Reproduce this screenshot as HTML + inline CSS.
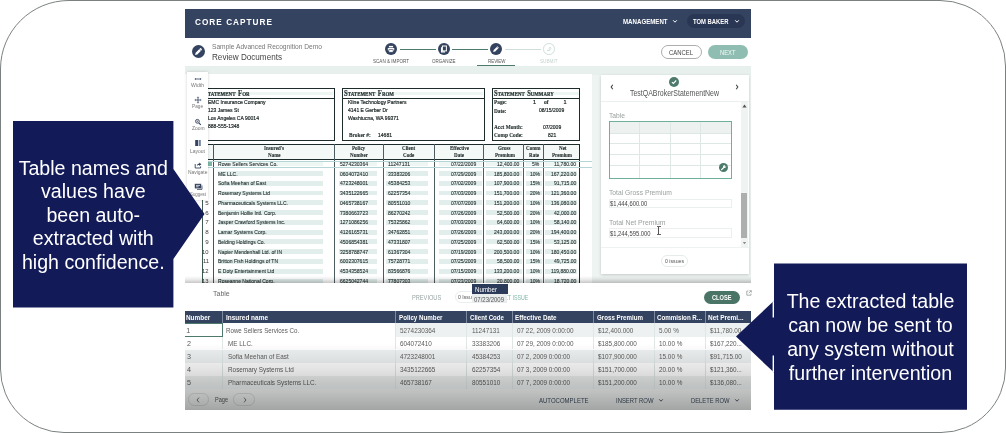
<!DOCTYPE html>
<html><head><meta charset="utf-8"><title>Core Capture</title>
<style>
*{box-sizing:border-box;margin:0;padding:0}
html,body{width:1006px;height:433px;overflow:hidden;background:#fff}
body{position:relative;font-family:"Liberation Sans",sans-serif;color:#444}
.a{position:absolute}
.t{position:absolute;white-space:pre;line-height:1}
.clip{position:absolute;left:0;top:0;width:1006px;height:433px}
.call{position:absolute;background:#141c5c}
</style></head><body><div id="root" style="position:absolute;left:0;top:0;width:1006px;height:433px;will-change:transform">
<div class="a" style="left:0;top:0;width:1006px;height:433px;border:1.5px solid #7b8080;border-radius:69px 66px 65px 64px"></div>
<div class="a" style="left:185px;top:9px;width:566px;height:401px;background:#fff;"></div>
<div class="a" style="left:185px;top:66px;width:566px;height:217px;background:#eef4f2;"></div>
<div class="a" style="left:185px;top:66px;width:566px;height:8.7px;background:#e8f0ed;"></div>
<div class="a" style="left:185px;top:9px;width:566px;height:28.5px;background:#34435f;"></div>
<div class="t" style="left:195.00px;top:17.00px;font-size:9.8px;color:#fff;font-weight:bold;letter-spacing:1.207px;transform:scaleX(0.8400);transform-origin:0 0;">CORE CAPTURE</div>
<div class="t" style="left:622.70px;top:18.00px;font-size:7.4px;color:#fff;font-weight:bold;transform:scaleX(0.8290);transform-origin:0 0;">MANAGEMENT</div>
<svg class="a" style="left:672px;top:19.3px" width="6" height="5" viewBox="0 0 6 5"><path d="M1.2 1.3 L3 3.2 L4.8 1.3" fill="none" stroke="#fff" stroke-width="1"/></svg>
<div class="a" style="left:686.7px;top:14.3px;width:58.3px;height:14px;background:#2a3754;border-radius:7px"></div>
<div class="t" style="left:693.00px;top:18.00px;font-size:7.4px;color:#fff;font-weight:bold;transform:scaleX(0.7955);transform-origin:0 0;">TOM BAKER</div>
<svg class="a" style="left:733.5px;top:19.3px" width="6" height="5" viewBox="0 0 6 5"><path d="M1.2 1.3 L3 3.2 L4.8 1.3" fill="none" stroke="#fff" stroke-width="1"/></svg>
<div class="a" style="left:185px;top:37.5px;width:566px;height:28.5px;background:#fff;"></div>
<div class="a" style="left:192px;top:45px;width:13px;height:13px;background:#34435f;border-radius:50%"></div>
<svg class="a" style="left:192px;top:45px" width="13" height="13" viewBox="0 0 13 13"><path d="M3.1 9.9 L3.6 7.7 L8.1 3.2 Q8.6 2.8 9.1 3.3 L9.7 3.9 Q10.2 4.4 9.8 4.9 L5.3 9.4 Z" fill="#fff"/><path d="M7.3 4 L9 5.7" stroke="#34435f" stroke-width=".55"/></svg>
<div class="t" style="left:212.20px;top:43.00px;font-size:7.3px;color:#777;transform:scaleX(0.9099);transform-origin:0 0;">Sample Advanced Recognition Demo</div>
<div class="t" style="left:212.20px;top:53.00px;font-size:8.7px;color:#444;transform:scaleX(0.9353);transform-origin:0 0;">Review Documents</div>
<div class="a" style="left:399.7px;top:48.5px;width:36.0px;height:1.1px;background:#4d7a6c;"></div>
<div class="a" style="left:452.4px;top:48.5px;width:36.0px;height:1.1px;background:#4d7a6c;"></div>
<div class="a" style="left:504.6px;top:48.5px;width:36.0px;height:1.1px;background:#cfdedb;"></div>
<div class="a" style="left:385.20000000000005px;top:43.1px;width:11.8px;height:11.8px;background:#34435f;border-radius:50%"></div>
<div class="a" style="left:437.90000000000003px;top:43.1px;width:11.8px;height:11.8px;background:#34435f;border-radius:50%"></div>
<div class="a" style="left:490.40000000000003px;top:43.1px;width:11.8px;height:11.8px;background:#34435f;border-radius:50%"></div>
<div class="a" style="left:543.1px;top:43.2px;width:11.6px;height:11.6px;background:#fff;border-radius:50%;border:1px solid #cfe0dc"></div>
<svg class="a" style="left:385.1px;top:43px" width="12" height="12" viewBox="0 0 12 12"><rect x="3.9" y="2.9" width="4.2" height="1.5" fill="#fff"/><rect x="2.8" y="4.9" width="6.4" height="2.9" rx=".7" fill="#fff"/><rect x="3.9" y="6.7" width="4.2" height="2.5" fill="#fff" stroke="#34435f" stroke-width=".6"/></svg>
<svg class="a" style="left:437.8px;top:43px" width="12" height="12" viewBox="0 0 12 12"><rect x="4.4" y="3" width="4" height="4.9" fill="none" stroke="#fff" stroke-width="1"/><path d="M3.5 4.2 V8.9 H7" fill="none" stroke="#fff" stroke-width="1.1"/></svg>
<svg class="a" style="left:490.3px;top:43px" width="12" height="12" viewBox="0 0 12 12"><path d="M3.2 8.9 L3.7 6.9 L7.4 3.2 L8.9 4.7 L5.2 8.4 Z" fill="#fff"/><path d="M6.7 3.9 L8.2 5.4" stroke="#34435f" stroke-width=".5"/></svg>
<svg class="a" style="left:542.9px;top:43px" width="12" height="12" viewBox="0 0 12 12"><path d="M4 7.4 H7 V4.6 M5.8 5.4 L7 4.2 L8.2 5.4" fill="none" stroke="#c3d8d3" stroke-width=".8"/></svg>
<div class="t" style="left:373.10px;top:59.00px;font-size:5.4px;color:#555;transform:scaleX(0.8483);transform-origin:0 0;">SCAN &amp; IMPORT</div>
<div class="t" style="left:432.05px;top:59.00px;font-size:5.4px;color:#555;transform:scaleX(0.8346);transform-origin:0 0;">ORGANIZE</div>
<div class="t" style="left:487.55px;top:59.00px;font-size:5.4px;color:#555;transform:scaleX(0.8229);transform-origin:0 0;">REVIEW</div>
<div class="t" style="left:540.15px;top:59.00px;font-size:5.4px;color:#c5d3d0;transform:scaleX(0.8589);transform-origin:0 0;">SUBMIT</div>
<div class="a" style="left:476.7px;top:64.5px;width:38.5px;height:1.5px;background:#4d7a6c;"></div>
<div class="a" style="left:660.8px;top:45px;width:41px;height:14px;background:#fff;border-radius:7px;border:1px solid #adadad"></div>
<div class="t" style="left:669.30px;top:49.00px;font-size:7.2px;color:#444;transform:scaleX(0.8227);transform-origin:0 0;">CANCEL</div>
<div class="a" style="left:707.5px;top:45px;width:40.5px;height:14px;background:#8fbdb1;border-radius:7px"></div>
<div class="t" style="left:720.05px;top:49.00px;font-size:7.2px;color:#f4fbf8;transform:scaleX(0.8085);transform-origin:0 0;">NEXT</div>
<div class="clip" style="clip-path:inset(74px 414px 150px 185px)">
<div class="a" style="left:185px;top:74px;width:407px;height:209px;background:#fff;"></div>
<div class="a" style="left:202px;top:88.2px;width:132.8px;height:52.5px;border:1.6px solid #1d2b2b"></div>
<div class="a" style="left:202px;top:97.7px;width:132.8px;height:1px;background:#1d2b2b;"></div>
<div class="a" style="left:203.3px;top:91.8px;width:130.20000000000002px;height:3.6px;background:#eef6f3;"></div>
<div class="a" style="left:342.3px;top:88.2px;width:142.5px;height:52.5px;border:1.6px solid #1d2b2b"></div>
<div class="a" style="left:342.3px;top:97.7px;width:142.5px;height:1px;background:#1d2b2b;"></div>
<div class="a" style="left:343.6px;top:91.8px;width:139.9px;height:3.6px;background:#eef6f3;"></div>
<div class="a" style="left:491.8px;top:88.2px;width:88.49999999999994px;height:52.5px;border:1.6px solid #1d2b2b"></div>
<div class="a" style="left:491.8px;top:97.7px;width:88.49999999999994px;height:1px;background:#1d2b2b;"></div>
<div class="a" style="left:493.1px;top:91.8px;width:85.89999999999995px;height:3.6px;background:#eef6f3;"></div>
<div class="t" style="left:203.6px;top:90px;font-family:'Liberation Serif',serif;font-size:7.4px;font-weight:bold;word-spacing:1px;color:#263030;-webkit-text-stroke:.2px #263030;transform:scaleX(0.9044);transform-origin:0 0">S<span style="font-size:5.5px">TATEMENT</span> F<span style="font-size:5.5px">OR</span></div>
<div class="t" style="left:344.2px;top:90px;font-family:'Liberation Serif',serif;font-size:7.4px;font-weight:bold;word-spacing:1px;color:#263030;-webkit-text-stroke:.2px #263030;transform:scaleX(0.8989);transform-origin:0 0">S<span style="font-size:5.5px">TATEMENT</span> F<span style="font-size:5.5px">ROM</span></div>
<div class="t" style="left:493.8px;top:90px;font-family:'Liberation Serif',serif;font-size:7.4px;font-weight:bold;word-spacing:1px;color:#263030;-webkit-text-stroke:.2px #263030;transform:scaleX(0.8800);transform-origin:0 0">S<span style="font-size:5.5px">TATEMENT</span> S<span style="font-size:5.5px">UMMARY</span></div>
<div class="t" style="left:207.80px;top:100.00px;font-size:5.6px;color:#1a2222;transform:scaleX(0.9000);transform-origin:0 0;-webkit-text-stroke:.2px currentColor;">EMC Insurance Company</div>
<div class="t" style="left:207.80px;top:108.00px;font-size:5.6px;color:#1a2222;transform:scaleX(0.9000);transform-origin:0 0;-webkit-text-stroke:.2px currentColor;">123 James St</div>
<div class="t" style="left:207.80px;top:116.00px;font-size:5.6px;color:#1a2222;transform:scaleX(0.9000);transform-origin:0 0;-webkit-text-stroke:.2px currentColor;">Los Angeles CA 90014</div>
<div class="t" style="left:207.80px;top:124.00px;font-size:5.6px;color:#1a2222;transform:scaleX(0.9000);transform-origin:0 0;-webkit-text-stroke:.2px currentColor;">888-555-1348</div>
<div class="t" style="left:348.30px;top:100.00px;font-size:5.6px;color:#1a2222;transform:scaleX(0.9000);transform-origin:0 0;-webkit-text-stroke:.2px currentColor;">Kline Technology Partners</div>
<div class="t" style="left:348.30px;top:108.00px;font-size:5.6px;color:#1a2222;transform:scaleX(0.9000);transform-origin:0 0;-webkit-text-stroke:.2px currentColor;">4141 E Gerber Dr</div>
<div class="t" style="left:348.30px;top:116.00px;font-size:5.6px;color:#1a2222;transform:scaleX(0.9000);transform-origin:0 0;-webkit-text-stroke:.2px currentColor;">Washtucna, WA 99371</div>
<div class="t" style="left:348.50px;top:133.00px;font-size:5.6px;color:#263030;font-weight:bold;font-family:'Liberation Serif',serif;transform:scaleX(0.9500);transform-origin:0 0;-webkit-text-stroke:.1px currentColor;">Broker #:</div>
<div class="t" style="left:378.30px;top:133.00px;font-size:5.6px;color:#1a2222;transform:scaleX(0.9000);transform-origin:0 0;-webkit-text-stroke:.2px currentColor;">14681</div>
<div class="t" style="left:493.80px;top:100.00px;font-size:5.6px;color:#263030;font-weight:bold;font-family:'Liberation Serif',serif;transform:scaleX(0.9500);transform-origin:0 0;-webkit-text-stroke:.1px currentColor;">Page:</div>
<div class="t" style="left:493.80px;top:109.00px;font-size:5.6px;color:#263030;font-weight:bold;font-family:'Liberation Serif',serif;transform:scaleX(0.9500);transform-origin:0 0;-webkit-text-stroke:.1px currentColor;">Date:</div>
<div class="t" style="left:493.80px;top:125.00px;font-size:5.6px;color:#263030;font-weight:bold;font-family:'Liberation Serif',serif;transform:scaleX(0.9500);transform-origin:0 0;-webkit-text-stroke:.1px currentColor;">Acct Month:</div>
<div class="t" style="left:493.80px;top:133.00px;font-size:5.6px;color:#263030;font-weight:bold;font-family:'Liberation Serif',serif;transform:scaleX(0.9500);transform-origin:0 0;-webkit-text-stroke:.1px currentColor;">Comp Code:</div>
<div class="t" style="left:533.00px;top:100.00px;font-size:5.6px;color:#1a2222;-webkit-text-stroke:.2px currentColor;">1</div>
<div class="t" style="left:544.00px;top:100.00px;font-size:5.6px;color:#263030;font-weight:bold;font-family:'Liberation Serif',serif;-webkit-text-stroke:.1px currentColor;">of</div>
<div class="t" style="left:563.50px;top:100.00px;font-size:5.6px;color:#1a2222;-webkit-text-stroke:.2px currentColor;">1</div>
<div class="t" style="left:539.40px;top:108.00px;font-size:5.6px;color:#1a2222;transform:scaleX(0.9000);transform-origin:0 0;-webkit-text-stroke:.2px currentColor;">08/15/2009</div>
<div class="t" style="left:542.89px;top:125.00px;font-size:5.6px;color:#1a2222;transform:scaleX(0.9000);transform-origin:0 0;-webkit-text-stroke:.2px currentColor;">07/2009</div>
<div class="t" style="left:547.80px;top:133.00px;font-size:5.6px;color:#1a2222;transform:scaleX(0.9000);transform-origin:0 0;-webkit-text-stroke:.2px currentColor;">821</div>
<div class="a" style="left:201.7px;top:143.8px;width:378.6px;height:1.2px;background:#1d2b2b;"></div>
<div class="a" style="left:201.7px;top:158.8px;width:378.6px;height:1px;background:#1d2b2b;"></div>
<div class="a" style="left:202px;top:144.6px;width:377.5px;height:14.4px;background:#f4f8f7;"></div>
<div class="a" style="left:201.8px;top:143.8px;width:1px;height:145px;background:#3f5a52;"></div>
<div class="a" style="left:212.9px;top:143.8px;width:1px;height:145px;background:#3f5a52;"></div>
<div class="a" style="left:334.20000000000005px;top:143.8px;width:0.8px;height:145px;background:#4d5d5f;"></div>
<div class="a" style="left:382.8px;top:143.8px;width:0.8px;height:145px;background:#4d5d5f;"></div>
<div class="a" style="left:434.0px;top:143.8px;width:0.8px;height:145px;background:#4d5d5f;"></div>
<div class="a" style="left:483.3px;top:143.8px;width:0.8px;height:145px;background:#4d5d5f;"></div>
<div class="a" style="left:523.4px;top:143.8px;width:0.8px;height:145px;background:#4d5d5f;"></div>
<div class="a" style="left:543.1px;top:143.8px;width:0.8px;height:145px;background:#4d5d5f;"></div>
<div class="a" style="left:578.55px;top:143.8px;width:1.9px;height:145px;background:#1d2b2b;"></div>
<div class="t" style="left:263.97px;top:146.00px;font-size:5.2px;color:#263030;font-weight:bold;font-family:'Liberation Serif',serif;transform:scaleX(0.9700);transform-origin:0 0;-webkit-text-stroke:.1px currentColor;">Insured&#x27;s</div>
<div class="t" style="left:267.71px;top:153.00px;font-size:5.2px;color:#263030;font-weight:bold;font-family:'Liberation Serif',serif;transform:scaleX(0.9700);transform-origin:0 0;-webkit-text-stroke:.1px currentColor;">Name</div>
<div class="t" style="left:352.33px;top:146.00px;font-size:5.2px;color:#263030;font-weight:bold;font-family:'Liberation Serif',serif;transform:scaleX(0.9700);transform-origin:0 0;-webkit-text-stroke:.1px currentColor;">Policy</div>
<div class="t" style="left:349.95px;top:153.00px;font-size:5.2px;color:#263030;font-weight:bold;font-family:'Liberation Serif',serif;transform:scaleX(0.9700);transform-origin:0 0;-webkit-text-stroke:.1px currentColor;">Number</div>
<div class="t" style="left:402.23px;top:146.00px;font-size:5.2px;color:#263030;font-weight:bold;font-family:'Liberation Serif',serif;transform:scaleX(0.9700);transform-origin:0 0;-webkit-text-stroke:.1px currentColor;">Client</div>
<div class="t" style="left:403.21px;top:153.00px;font-size:5.2px;color:#263030;font-weight:bold;font-family:'Liberation Serif',serif;transform:scaleX(0.9700);transform-origin:0 0;-webkit-text-stroke:.1px currentColor;">Code</div>
<div class="t" style="left:449.50px;top:146.00px;font-size:5.2px;color:#263030;font-weight:bold;font-family:'Liberation Serif',serif;transform:scaleX(0.9700);transform-origin:0 0;-webkit-text-stroke:.1px currentColor;">Effective</div>
<div class="t" style="left:453.97px;top:153.00px;font-size:5.2px;color:#263030;font-weight:bold;font-family:'Liberation Serif',serif;transform:scaleX(0.9700);transform-origin:0 0;-webkit-text-stroke:.1px currentColor;">Date</div>
<div class="t" style="left:498.36px;top:146.00px;font-size:5.2px;color:#263030;font-weight:bold;font-family:'Liberation Serif',serif;transform:scaleX(0.9700);transform-origin:0 0;-webkit-text-stroke:.1px currentColor;">Gross</div>
<div class="t" style="left:494.58px;top:153.00px;font-size:5.2px;color:#263030;font-weight:bold;font-family:'Liberation Serif',serif;transform:scaleX(0.9700);transform-origin:0 0;-webkit-text-stroke:.1px currentColor;">Premium</div>
<div class="t" style="left:526.33px;top:146.00px;font-size:5.2px;color:#263030;font-weight:bold;font-family:'Liberation Serif',serif;transform:scaleX(0.9700);transform-origin:0 0;-webkit-text-stroke:.1px currentColor;">Comm</div>
<div class="t" style="left:528.57px;top:153.00px;font-size:5.2px;color:#263030;font-weight:bold;font-family:'Liberation Serif',serif;transform:scaleX(0.9700);transform-origin:0 0;-webkit-text-stroke:.1px currentColor;">Rate</div>
<div class="t" style="left:558.63px;top:146.00px;font-size:5.2px;color:#263030;font-weight:bold;font-family:'Liberation Serif',serif;transform:scaleX(0.9700);transform-origin:0 0;-webkit-text-stroke:.1px currentColor;">Net</div>
<div class="t" style="left:552.38px;top:153.00px;font-size:5.2px;color:#263030;font-weight:bold;font-family:'Liberation Serif',serif;transform:scaleX(0.9700);transform-origin:0 0;-webkit-text-stroke:.1px currentColor;">Premium</div>
<div class="a" style="left:217.5px;top:161.4px;width:105.0px;height:4.8px;background:#eef6f4;"></div>
<div class="a" style="left:338.6px;top:161.4px;width:38.099999999999966px;height:4.8px;background:#eef6f4;"></div>
<div class="a" style="left:386.4px;top:161.4px;width:42.10000000000002px;height:4.8px;background:#eef6f4;"></div>
<div class="a" style="left:439px;top:161.4px;width:43px;height:4.8px;background:#eef6f4;"></div>
<div class="a" style="left:486.3px;top:161.4px;width:35.900000000000034px;height:4.8px;background:#eef6f4;"></div>
<div class="a" style="left:525.6px;top:161.4px;width:16.399999999999977px;height:4.8px;background:#eef6f4;"></div>
<div class="a" style="left:545.3px;top:161.4px;width:32.200000000000045px;height:4.8px;background:#eef6f4;"></div>
<div class="a" style="left:200px;top:160.9px;width:392px;height:0.9px;background:#b4d6d6;"></div>
<div class="a" style="left:200px;top:167.4px;width:392px;height:0.9px;background:#b4d6d6;"></div>
<div class="a" style="left:208.3px;top:162px;width:3.6px;height:4.2px;background:#7fb7a6;"></div>
<div class="t" style="left:204.05px;top:161.00px;font-size:6.2px;color:#3a3a3a;">1</div>
<div class="t" style="left:217.80px;top:162.00px;font-size:5.6px;color:#263030;transform:scaleX(0.9000);transform-origin:0 0;-webkit-text-stroke:.1px currentColor;">Rowe Sellers Services Co.</div>
<div class="t" style="left:339.50px;top:162.00px;font-size:5.6px;color:#263030;transform:scaleX(0.9000);transform-origin:0 0;-webkit-text-stroke:.1px currentColor;">5274230364</div>
<div class="t" style="left:387.90px;top:162.00px;font-size:5.6px;color:#263030;transform:scaleX(0.9000);transform-origin:0 0;-webkit-text-stroke:.1px currentColor;">11247131</div>
<div class="t" style="left:450.50px;top:162.00px;font-size:5.6px;color:#263030;transform:scaleX(0.9000);transform-origin:0 0;-webkit-text-stroke:.1px currentColor;">07/22/2009</div>
<div class="t" style="left:497.20px;top:162.00px;font-size:5.6px;color:#263030;transform:scaleX(0.9000);transform-origin:0 0;-webkit-text-stroke:.1px currentColor;">12,400.00</div>
<div class="t" style="left:531.76px;top:162.00px;font-size:5.6px;color:#263030;transform:scaleX(0.9000);transform-origin:0 0;-webkit-text-stroke:.1px currentColor;">5%</div>
<div class="t" style="left:553.96px;top:162.00px;font-size:5.6px;color:#263030;transform:scaleX(0.9000);transform-origin:0 0;-webkit-text-stroke:.1px currentColor;">11,780.00</div>
<div class="a" style="left:217.5px;top:171.16px;width:105.0px;height:4.8px;background:#e1eeeb;"></div>
<div class="a" style="left:338.6px;top:171.16px;width:38.099999999999966px;height:4.8px;background:#e1eeeb;"></div>
<div class="a" style="left:386.4px;top:171.16px;width:42.10000000000002px;height:4.8px;background:#e1eeeb;"></div>
<div class="a" style="left:439px;top:171.16px;width:43px;height:4.8px;background:#e1eeeb;"></div>
<div class="a" style="left:486.3px;top:171.16px;width:35.900000000000034px;height:4.8px;background:#e1eeeb;"></div>
<div class="a" style="left:525.6px;top:171.16px;width:16.399999999999977px;height:4.8px;background:#e1eeeb;"></div>
<div class="a" style="left:545.3px;top:171.16px;width:32.200000000000045px;height:4.8px;background:#e1eeeb;"></div>
<div class="t" style="left:204.05px;top:171.00px;font-size:6.2px;color:#3a3a3a;">2</div>
<div class="t" style="left:217.80px;top:172.00px;font-size:5.6px;color:#263030;transform:scaleX(0.9000);transform-origin:0 0;-webkit-text-stroke:.1px currentColor;">ME LLC.</div>
<div class="t" style="left:339.50px;top:172.00px;font-size:5.6px;color:#263030;transform:scaleX(0.9000);transform-origin:0 0;-webkit-text-stroke:.1px currentColor;">0604072410</div>
<div class="t" style="left:387.90px;top:172.00px;font-size:5.6px;color:#263030;transform:scaleX(0.9000);transform-origin:0 0;-webkit-text-stroke:.1px currentColor;">33383206</div>
<div class="t" style="left:450.50px;top:172.00px;font-size:5.6px;color:#263030;transform:scaleX(0.9000);transform-origin:0 0;-webkit-text-stroke:.1px currentColor;">07/29/2009</div>
<div class="t" style="left:494.40px;top:172.00px;font-size:5.6px;color:#263030;transform:scaleX(0.9000);transform-origin:0 0;-webkit-text-stroke:.1px currentColor;">185,800.00</div>
<div class="t" style="left:530.36px;top:172.00px;font-size:5.6px;color:#263030;transform:scaleX(0.9000);transform-origin:0 0;-webkit-text-stroke:.1px currentColor;">10%</div>
<div class="t" style="left:550.80px;top:172.00px;font-size:5.6px;color:#263030;transform:scaleX(0.9000);transform-origin:0 0;-webkit-text-stroke:.1px currentColor;">167,220.00</div>
<div class="a" style="left:217.5px;top:180.92px;width:105.0px;height:4.8px;background:#e1eeeb;"></div>
<div class="a" style="left:338.6px;top:180.92px;width:38.099999999999966px;height:4.8px;background:#e1eeeb;"></div>
<div class="a" style="left:386.4px;top:180.92px;width:42.10000000000002px;height:4.8px;background:#e1eeeb;"></div>
<div class="a" style="left:439px;top:180.92px;width:43px;height:4.8px;background:#e1eeeb;"></div>
<div class="a" style="left:486.3px;top:180.92px;width:35.900000000000034px;height:4.8px;background:#e1eeeb;"></div>
<div class="a" style="left:525.6px;top:180.92px;width:16.399999999999977px;height:4.8px;background:#e1eeeb;"></div>
<div class="a" style="left:545.3px;top:180.92px;width:32.200000000000045px;height:4.8px;background:#e1eeeb;"></div>
<div class="t" style="left:204.05px;top:180.00px;font-size:6.2px;color:#3a3a3a;">3</div>
<div class="t" style="left:217.80px;top:181.00px;font-size:5.6px;color:#263030;transform:scaleX(0.9000);transform-origin:0 0;-webkit-text-stroke:.1px currentColor;">Sofia Meehan of East</div>
<div class="t" style="left:339.50px;top:181.00px;font-size:5.6px;color:#263030;transform:scaleX(0.9000);transform-origin:0 0;-webkit-text-stroke:.1px currentColor;">4723248001</div>
<div class="t" style="left:387.90px;top:181.00px;font-size:5.6px;color:#263030;transform:scaleX(0.9000);transform-origin:0 0;-webkit-text-stroke:.1px currentColor;">45384253</div>
<div class="t" style="left:450.50px;top:181.00px;font-size:5.6px;color:#263030;transform:scaleX(0.9000);transform-origin:0 0;-webkit-text-stroke:.1px currentColor;">07/02/2009</div>
<div class="t" style="left:494.40px;top:181.00px;font-size:5.6px;color:#263030;transform:scaleX(0.9000);transform-origin:0 0;-webkit-text-stroke:.1px currentColor;">107,900.00</div>
<div class="t" style="left:530.36px;top:181.00px;font-size:5.6px;color:#263030;transform:scaleX(0.9000);transform-origin:0 0;-webkit-text-stroke:.1px currentColor;">15%</div>
<div class="t" style="left:553.60px;top:181.00px;font-size:5.6px;color:#263030;transform:scaleX(0.9000);transform-origin:0 0;-webkit-text-stroke:.1px currentColor;">91,715.00</div>
<div class="a" style="left:217.5px;top:190.68px;width:105.0px;height:4.8px;background:#e1eeeb;"></div>
<div class="a" style="left:338.6px;top:190.68px;width:38.099999999999966px;height:4.8px;background:#e1eeeb;"></div>
<div class="a" style="left:386.4px;top:190.68px;width:42.10000000000002px;height:4.8px;background:#e1eeeb;"></div>
<div class="a" style="left:439px;top:190.68px;width:43px;height:4.8px;background:#e1eeeb;"></div>
<div class="a" style="left:486.3px;top:190.68px;width:35.900000000000034px;height:4.8px;background:#e1eeeb;"></div>
<div class="a" style="left:525.6px;top:190.68px;width:16.399999999999977px;height:4.8px;background:#e1eeeb;"></div>
<div class="a" style="left:545.3px;top:190.68px;width:32.200000000000045px;height:4.8px;background:#e1eeeb;"></div>
<div class="t" style="left:204.05px;top:190.00px;font-size:6.2px;color:#3a3a3a;">4</div>
<div class="t" style="left:217.80px;top:191.00px;font-size:5.6px;color:#263030;transform:scaleX(0.9000);transform-origin:0 0;-webkit-text-stroke:.1px currentColor;">Rosemary Systems Ltd</div>
<div class="t" style="left:339.50px;top:191.00px;font-size:5.6px;color:#263030;transform:scaleX(0.9000);transform-origin:0 0;-webkit-text-stroke:.1px currentColor;">3435122665</div>
<div class="t" style="left:387.90px;top:191.00px;font-size:5.6px;color:#263030;transform:scaleX(0.9000);transform-origin:0 0;-webkit-text-stroke:.1px currentColor;">62257354</div>
<div class="t" style="left:450.50px;top:191.00px;font-size:5.6px;color:#263030;transform:scaleX(0.9000);transform-origin:0 0;-webkit-text-stroke:.1px currentColor;">07/03/2009</div>
<div class="t" style="left:494.40px;top:191.00px;font-size:5.6px;color:#263030;transform:scaleX(0.9000);transform-origin:0 0;-webkit-text-stroke:.1px currentColor;">151,700.00</div>
<div class="t" style="left:530.36px;top:191.00px;font-size:5.6px;color:#263030;transform:scaleX(0.9000);transform-origin:0 0;-webkit-text-stroke:.1px currentColor;">20%</div>
<div class="t" style="left:550.80px;top:191.00px;font-size:5.6px;color:#263030;transform:scaleX(0.9000);transform-origin:0 0;-webkit-text-stroke:.1px currentColor;">121,360.00</div>
<div class="a" style="left:217.5px;top:200.44px;width:105.0px;height:4.8px;background:#e1eeeb;"></div>
<div class="a" style="left:338.6px;top:200.44px;width:38.099999999999966px;height:4.8px;background:#e1eeeb;"></div>
<div class="a" style="left:386.4px;top:200.44px;width:42.10000000000002px;height:4.8px;background:#e1eeeb;"></div>
<div class="a" style="left:439px;top:200.44px;width:43px;height:4.8px;background:#e1eeeb;"></div>
<div class="a" style="left:486.3px;top:200.44px;width:35.900000000000034px;height:4.8px;background:#e1eeeb;"></div>
<div class="a" style="left:525.6px;top:200.44px;width:16.399999999999977px;height:4.8px;background:#e1eeeb;"></div>
<div class="a" style="left:545.3px;top:200.44px;width:32.200000000000045px;height:4.8px;background:#e1eeeb;"></div>
<div class="t" style="left:205.35px;top:200.00px;font-size:6.2px;color:#3a3a3a;">5</div>
<div class="t" style="left:217.80px;top:201.00px;font-size:5.6px;color:#263030;transform:scaleX(0.9000);transform-origin:0 0;-webkit-text-stroke:.1px currentColor;">Pharmaceuticals Systems LLC.</div>
<div class="t" style="left:339.50px;top:201.00px;font-size:5.6px;color:#263030;transform:scaleX(0.9000);transform-origin:0 0;-webkit-text-stroke:.1px currentColor;">0465738167</div>
<div class="t" style="left:387.90px;top:201.00px;font-size:5.6px;color:#263030;transform:scaleX(0.9000);transform-origin:0 0;-webkit-text-stroke:.1px currentColor;">80551010</div>
<div class="t" style="left:450.50px;top:201.00px;font-size:5.6px;color:#263030;transform:scaleX(0.9000);transform-origin:0 0;-webkit-text-stroke:.1px currentColor;">07/07/2009</div>
<div class="t" style="left:494.40px;top:201.00px;font-size:5.6px;color:#263030;transform:scaleX(0.9000);transform-origin:0 0;-webkit-text-stroke:.1px currentColor;">151,200.00</div>
<div class="t" style="left:530.36px;top:201.00px;font-size:5.6px;color:#263030;transform:scaleX(0.9000);transform-origin:0 0;-webkit-text-stroke:.1px currentColor;">10%</div>
<div class="t" style="left:550.80px;top:201.00px;font-size:5.6px;color:#263030;transform:scaleX(0.9000);transform-origin:0 0;-webkit-text-stroke:.1px currentColor;">136,080.00</div>
<div class="a" style="left:217.5px;top:210.2px;width:105.0px;height:4.8px;background:#e1eeeb;"></div>
<div class="a" style="left:338.6px;top:210.2px;width:38.099999999999966px;height:4.8px;background:#e1eeeb;"></div>
<div class="a" style="left:386.4px;top:210.2px;width:42.10000000000002px;height:4.8px;background:#e1eeeb;"></div>
<div class="a" style="left:439px;top:210.2px;width:43px;height:4.8px;background:#e1eeeb;"></div>
<div class="a" style="left:486.3px;top:210.2px;width:35.900000000000034px;height:4.8px;background:#e1eeeb;"></div>
<div class="a" style="left:525.6px;top:210.2px;width:16.399999999999977px;height:4.8px;background:#e1eeeb;"></div>
<div class="a" style="left:545.3px;top:210.2px;width:32.200000000000045px;height:4.8px;background:#e1eeeb;"></div>
<div class="t" style="left:205.35px;top:210.00px;font-size:6.2px;color:#3a3a3a;">6</div>
<div class="t" style="left:217.80px;top:211.00px;font-size:5.6px;color:#263030;transform:scaleX(0.9000);transform-origin:0 0;-webkit-text-stroke:.1px currentColor;">Benjamin Hollie Intl. Corp.</div>
<div class="t" style="left:339.50px;top:211.00px;font-size:5.6px;color:#263030;transform:scaleX(0.9000);transform-origin:0 0;-webkit-text-stroke:.1px currentColor;">7380663723</div>
<div class="t" style="left:387.90px;top:211.00px;font-size:5.6px;color:#263030;transform:scaleX(0.9000);transform-origin:0 0;-webkit-text-stroke:.1px currentColor;">86270242</div>
<div class="t" style="left:450.50px;top:211.00px;font-size:5.6px;color:#263030;transform:scaleX(0.9000);transform-origin:0 0;-webkit-text-stroke:.1px currentColor;">07/26/2009</div>
<div class="t" style="left:497.20px;top:211.00px;font-size:5.6px;color:#263030;transform:scaleX(0.9000);transform-origin:0 0;-webkit-text-stroke:.1px currentColor;">52,500.00</div>
<div class="t" style="left:530.36px;top:211.00px;font-size:5.6px;color:#263030;transform:scaleX(0.9000);transform-origin:0 0;-webkit-text-stroke:.1px currentColor;">20%</div>
<div class="t" style="left:553.60px;top:211.00px;font-size:5.6px;color:#263030;transform:scaleX(0.9000);transform-origin:0 0;-webkit-text-stroke:.1px currentColor;">42,000.00</div>
<div class="a" style="left:217.5px;top:219.96px;width:105.0px;height:4.8px;background:#e1eeeb;"></div>
<div class="a" style="left:338.6px;top:219.96px;width:38.099999999999966px;height:4.8px;background:#e1eeeb;"></div>
<div class="a" style="left:386.4px;top:219.96px;width:42.10000000000002px;height:4.8px;background:#e1eeeb;"></div>
<div class="a" style="left:439px;top:219.96px;width:43px;height:4.8px;background:#e1eeeb;"></div>
<div class="a" style="left:486.3px;top:219.96px;width:35.900000000000034px;height:4.8px;background:#e1eeeb;"></div>
<div class="a" style="left:525.6px;top:219.96px;width:16.399999999999977px;height:4.8px;background:#e1eeeb;"></div>
<div class="a" style="left:545.3px;top:219.96px;width:32.200000000000045px;height:4.8px;background:#e1eeeb;"></div>
<div class="t" style="left:205.35px;top:219.00px;font-size:6.2px;color:#3a3a3a;">7</div>
<div class="t" style="left:217.80px;top:220.00px;font-size:5.6px;color:#263030;transform:scaleX(0.9000);transform-origin:0 0;-webkit-text-stroke:.1px currentColor;">Jasper Crawford Systems Inc.</div>
<div class="t" style="left:339.50px;top:220.00px;font-size:5.6px;color:#263030;transform:scaleX(0.9000);transform-origin:0 0;-webkit-text-stroke:.1px currentColor;">1271086256</div>
<div class="t" style="left:387.90px;top:220.00px;font-size:5.6px;color:#263030;transform:scaleX(0.9000);transform-origin:0 0;-webkit-text-stroke:.1px currentColor;">75325862</div>
<div class="t" style="left:450.50px;top:220.00px;font-size:5.6px;color:#263030;transform:scaleX(0.9000);transform-origin:0 0;-webkit-text-stroke:.1px currentColor;">07/03/2009</div>
<div class="t" style="left:497.20px;top:220.00px;font-size:5.6px;color:#263030;transform:scaleX(0.9000);transform-origin:0 0;-webkit-text-stroke:.1px currentColor;">64,600.00</div>
<div class="t" style="left:530.36px;top:220.00px;font-size:5.6px;color:#263030;transform:scaleX(0.9000);transform-origin:0 0;-webkit-text-stroke:.1px currentColor;">10%</div>
<div class="t" style="left:553.60px;top:220.00px;font-size:5.6px;color:#263030;transform:scaleX(0.9000);transform-origin:0 0;-webkit-text-stroke:.1px currentColor;">58,140.00</div>
<div class="a" style="left:217.5px;top:229.72px;width:105.0px;height:4.8px;background:#e1eeeb;"></div>
<div class="a" style="left:338.6px;top:229.72px;width:38.099999999999966px;height:4.8px;background:#e1eeeb;"></div>
<div class="a" style="left:386.4px;top:229.72px;width:42.10000000000002px;height:4.8px;background:#e1eeeb;"></div>
<div class="a" style="left:439px;top:229.72px;width:43px;height:4.8px;background:#e1eeeb;"></div>
<div class="a" style="left:486.3px;top:229.72px;width:35.900000000000034px;height:4.8px;background:#e1eeeb;"></div>
<div class="a" style="left:525.6px;top:229.72px;width:16.399999999999977px;height:4.8px;background:#e1eeeb;"></div>
<div class="a" style="left:545.3px;top:229.72px;width:32.200000000000045px;height:4.8px;background:#e1eeeb;"></div>
<div class="t" style="left:205.35px;top:229.00px;font-size:6.2px;color:#3a3a3a;">8</div>
<div class="t" style="left:217.80px;top:230.00px;font-size:5.6px;color:#263030;transform:scaleX(0.9000);transform-origin:0 0;-webkit-text-stroke:.1px currentColor;">Lamar Systems Corp.</div>
<div class="t" style="left:339.50px;top:230.00px;font-size:5.6px;color:#263030;transform:scaleX(0.9000);transform-origin:0 0;-webkit-text-stroke:.1px currentColor;">4126165731</div>
<div class="t" style="left:387.90px;top:230.00px;font-size:5.6px;color:#263030;transform:scaleX(0.9000);transform-origin:0 0;-webkit-text-stroke:.1px currentColor;">34762851</div>
<div class="t" style="left:450.50px;top:230.00px;font-size:5.6px;color:#263030;transform:scaleX(0.9000);transform-origin:0 0;-webkit-text-stroke:.1px currentColor;">07/26/2009</div>
<div class="t" style="left:494.40px;top:230.00px;font-size:5.6px;color:#263030;transform:scaleX(0.9000);transform-origin:0 0;-webkit-text-stroke:.1px currentColor;">243,000.00</div>
<div class="t" style="left:530.36px;top:230.00px;font-size:5.6px;color:#263030;transform:scaleX(0.9000);transform-origin:0 0;-webkit-text-stroke:.1px currentColor;">20%</div>
<div class="t" style="left:550.80px;top:230.00px;font-size:5.6px;color:#263030;transform:scaleX(0.9000);transform-origin:0 0;-webkit-text-stroke:.1px currentColor;">194,400.00</div>
<div class="a" style="left:217.5px;top:239.48px;width:105.0px;height:4.8px;background:#e1eeeb;"></div>
<div class="a" style="left:338.6px;top:239.48px;width:38.099999999999966px;height:4.8px;background:#e1eeeb;"></div>
<div class="a" style="left:386.4px;top:239.48px;width:42.10000000000002px;height:4.8px;background:#e1eeeb;"></div>
<div class="a" style="left:439px;top:239.48px;width:43px;height:4.8px;background:#e1eeeb;"></div>
<div class="a" style="left:486.3px;top:239.48px;width:35.900000000000034px;height:4.8px;background:#e1eeeb;"></div>
<div class="a" style="left:525.6px;top:239.48px;width:16.399999999999977px;height:4.8px;background:#e1eeeb;"></div>
<div class="a" style="left:545.3px;top:239.48px;width:32.200000000000045px;height:4.8px;background:#e1eeeb;"></div>
<div class="t" style="left:205.35px;top:239.00px;font-size:6.2px;color:#3a3a3a;">9</div>
<div class="t" style="left:217.80px;top:240.00px;font-size:5.6px;color:#263030;transform:scaleX(0.9000);transform-origin:0 0;-webkit-text-stroke:.1px currentColor;">Belding Holdings Co.</div>
<div class="t" style="left:339.50px;top:240.00px;font-size:5.6px;color:#263030;transform:scaleX(0.9000);transform-origin:0 0;-webkit-text-stroke:.1px currentColor;">4506854381</div>
<div class="t" style="left:387.90px;top:240.00px;font-size:5.6px;color:#263030;transform:scaleX(0.9000);transform-origin:0 0;-webkit-text-stroke:.1px currentColor;">47331807</div>
<div class="t" style="left:450.50px;top:240.00px;font-size:5.6px;color:#263030;transform:scaleX(0.9000);transform-origin:0 0;-webkit-text-stroke:.1px currentColor;">07/25/2009</div>
<div class="t" style="left:497.20px;top:240.00px;font-size:5.6px;color:#263030;transform:scaleX(0.9000);transform-origin:0 0;-webkit-text-stroke:.1px currentColor;">62,500.00</div>
<div class="t" style="left:530.36px;top:240.00px;font-size:5.6px;color:#263030;transform:scaleX(0.9000);transform-origin:0 0;-webkit-text-stroke:.1px currentColor;">15%</div>
<div class="t" style="left:553.60px;top:240.00px;font-size:5.6px;color:#263030;transform:scaleX(0.9000);transform-origin:0 0;-webkit-text-stroke:.1px currentColor;">53,125.00</div>
<div class="a" style="left:217.5px;top:249.24px;width:105.0px;height:4.8px;background:#e1eeeb;"></div>
<div class="a" style="left:338.6px;top:249.24px;width:38.099999999999966px;height:4.8px;background:#e1eeeb;"></div>
<div class="a" style="left:386.4px;top:249.24px;width:42.10000000000002px;height:4.8px;background:#e1eeeb;"></div>
<div class="a" style="left:439px;top:249.24px;width:43px;height:4.8px;background:#e1eeeb;"></div>
<div class="a" style="left:486.3px;top:249.24px;width:35.900000000000034px;height:4.8px;background:#e1eeeb;"></div>
<div class="a" style="left:525.6px;top:249.24px;width:16.399999999999977px;height:4.8px;background:#e1eeeb;"></div>
<div class="a" style="left:545.3px;top:249.24px;width:32.200000000000045px;height:4.8px;background:#e1eeeb;"></div>
<div class="t" style="left:202.25px;top:249.00px;font-size:6.2px;color:#3a3a3a;transform:scaleX(0.9500);transform-origin:0 0;">10</div>
<div class="t" style="left:217.80px;top:250.00px;font-size:5.6px;color:#263030;transform:scaleX(0.9000);transform-origin:0 0;-webkit-text-stroke:.1px currentColor;">Napier Mendenhall Ltd. of IN</div>
<div class="t" style="left:339.50px;top:250.00px;font-size:5.6px;color:#263030;transform:scaleX(0.9000);transform-origin:0 0;-webkit-text-stroke:.1px currentColor;">3258788747</div>
<div class="t" style="left:387.90px;top:250.00px;font-size:5.6px;color:#263030;transform:scaleX(0.9000);transform-origin:0 0;-webkit-text-stroke:.1px currentColor;">61367304</div>
<div class="t" style="left:450.50px;top:250.00px;font-size:5.6px;color:#263030;transform:scaleX(0.9000);transform-origin:0 0;-webkit-text-stroke:.1px currentColor;">07/19/2009</div>
<div class="t" style="left:494.40px;top:250.00px;font-size:5.6px;color:#263030;transform:scaleX(0.9000);transform-origin:0 0;-webkit-text-stroke:.1px currentColor;">200,500.00</div>
<div class="t" style="left:530.36px;top:250.00px;font-size:5.6px;color:#263030;transform:scaleX(0.9000);transform-origin:0 0;-webkit-text-stroke:.1px currentColor;">10%</div>
<div class="t" style="left:550.80px;top:250.00px;font-size:5.6px;color:#263030;transform:scaleX(0.9000);transform-origin:0 0;-webkit-text-stroke:.1px currentColor;">180,450.00</div>
<div class="a" style="left:217.5px;top:259.0px;width:105.0px;height:4.8px;background:#e1eeeb;"></div>
<div class="a" style="left:338.6px;top:259.0px;width:38.099999999999966px;height:4.8px;background:#e1eeeb;"></div>
<div class="a" style="left:386.4px;top:259.0px;width:42.10000000000002px;height:4.8px;background:#e1eeeb;"></div>
<div class="a" style="left:439px;top:259.0px;width:43px;height:4.8px;background:#e1eeeb;"></div>
<div class="a" style="left:486.3px;top:259.0px;width:35.900000000000034px;height:4.8px;background:#e1eeeb;"></div>
<div class="a" style="left:525.6px;top:259.0px;width:16.399999999999977px;height:4.8px;background:#e1eeeb;"></div>
<div class="a" style="left:545.3px;top:259.0px;width:32.200000000000045px;height:4.8px;background:#e1eeeb;"></div>
<div class="t" style="left:202.68px;top:258.00px;font-size:6.2px;color:#3a3a3a;transform:scaleX(0.9500);transform-origin:0 0;">11</div>
<div class="t" style="left:217.80px;top:259.00px;font-size:5.6px;color:#263030;transform:scaleX(0.9000);transform-origin:0 0;-webkit-text-stroke:.1px currentColor;">Britton Fish Holdings of TN</div>
<div class="t" style="left:339.50px;top:259.00px;font-size:5.6px;color:#263030;transform:scaleX(0.9000);transform-origin:0 0;-webkit-text-stroke:.1px currentColor;">6002307615</div>
<div class="t" style="left:387.90px;top:259.00px;font-size:5.6px;color:#263030;transform:scaleX(0.9000);transform-origin:0 0;-webkit-text-stroke:.1px currentColor;">75728771</div>
<div class="t" style="left:450.50px;top:259.00px;font-size:5.6px;color:#263030;transform:scaleX(0.9000);transform-origin:0 0;-webkit-text-stroke:.1px currentColor;">07/25/2009</div>
<div class="t" style="left:497.20px;top:259.00px;font-size:5.6px;color:#263030;transform:scaleX(0.9000);transform-origin:0 0;-webkit-text-stroke:.1px currentColor;">58,500.00</div>
<div class="t" style="left:530.36px;top:259.00px;font-size:5.6px;color:#263030;transform:scaleX(0.9000);transform-origin:0 0;-webkit-text-stroke:.1px currentColor;">15%</div>
<div class="t" style="left:553.60px;top:259.00px;font-size:5.6px;color:#263030;transform:scaleX(0.9000);transform-origin:0 0;-webkit-text-stroke:.1px currentColor;">49,725.00</div>
<div class="a" style="left:217.5px;top:268.76px;width:105.0px;height:4.8px;background:#e1eeeb;"></div>
<div class="a" style="left:338.6px;top:268.76px;width:38.099999999999966px;height:4.8px;background:#e1eeeb;"></div>
<div class="a" style="left:386.4px;top:268.76px;width:42.10000000000002px;height:4.8px;background:#e1eeeb;"></div>
<div class="a" style="left:439px;top:268.76px;width:43px;height:4.8px;background:#e1eeeb;"></div>
<div class="a" style="left:486.3px;top:268.76px;width:35.900000000000034px;height:4.8px;background:#e1eeeb;"></div>
<div class="a" style="left:525.6px;top:268.76px;width:16.399999999999977px;height:4.8px;background:#e1eeeb;"></div>
<div class="a" style="left:545.3px;top:268.76px;width:32.200000000000045px;height:4.8px;background:#e1eeeb;"></div>
<div class="t" style="left:202.25px;top:268.00px;font-size:6.2px;color:#3a3a3a;transform:scaleX(0.9500);transform-origin:0 0;">12</div>
<div class="t" style="left:217.80px;top:269.00px;font-size:5.6px;color:#263030;transform:scaleX(0.9000);transform-origin:0 0;-webkit-text-stroke:.1px currentColor;">E Doty Entertainment Ltd</div>
<div class="t" style="left:339.50px;top:269.00px;font-size:5.6px;color:#263030;transform:scaleX(0.9000);transform-origin:0 0;-webkit-text-stroke:.1px currentColor;">4534358524</div>
<div class="t" style="left:387.90px;top:269.00px;font-size:5.6px;color:#263030;transform:scaleX(0.9000);transform-origin:0 0;-webkit-text-stroke:.1px currentColor;">83566876</div>
<div class="t" style="left:450.50px;top:269.00px;font-size:5.6px;color:#263030;transform:scaleX(0.9000);transform-origin:0 0;-webkit-text-stroke:.1px currentColor;">07/15/2009</div>
<div class="t" style="left:494.40px;top:269.00px;font-size:5.6px;color:#263030;transform:scaleX(0.9000);transform-origin:0 0;-webkit-text-stroke:.1px currentColor;">133,200.00</div>
<div class="t" style="left:530.36px;top:269.00px;font-size:5.6px;color:#263030;transform:scaleX(0.9000);transform-origin:0 0;-webkit-text-stroke:.1px currentColor;">10%</div>
<div class="t" style="left:551.17px;top:269.00px;font-size:5.6px;color:#263030;transform:scaleX(0.9000);transform-origin:0 0;-webkit-text-stroke:.1px currentColor;">119,880.00</div>
<div class="a" style="left:217.5px;top:278.52px;width:105.0px;height:4.8px;background:#e1eeeb;"></div>
<div class="a" style="left:338.6px;top:278.52px;width:38.099999999999966px;height:4.8px;background:#e1eeeb;"></div>
<div class="a" style="left:386.4px;top:278.52px;width:42.10000000000002px;height:4.8px;background:#e1eeeb;"></div>
<div class="a" style="left:439px;top:278.52px;width:43px;height:4.8px;background:#e1eeeb;"></div>
<div class="a" style="left:486.3px;top:278.52px;width:35.900000000000034px;height:4.8px;background:#e1eeeb;"></div>
<div class="a" style="left:525.6px;top:278.52px;width:16.399999999999977px;height:4.8px;background:#e1eeeb;"></div>
<div class="a" style="left:545.3px;top:278.52px;width:32.200000000000045px;height:4.8px;background:#e1eeeb;"></div>
<div class="t" style="left:202.25px;top:278.00px;font-size:6.2px;color:#3a3a3a;transform:scaleX(0.9500);transform-origin:0 0;">13</div>
<div class="t" style="left:217.80px;top:279.00px;font-size:5.6px;color:#263030;transform:scaleX(0.9000);transform-origin:0 0;-webkit-text-stroke:.1px currentColor;">Roseanne National Corp.</div>
<div class="t" style="left:339.50px;top:279.00px;font-size:5.6px;color:#263030;transform:scaleX(0.9000);transform-origin:0 0;-webkit-text-stroke:.1px currentColor;">6625042744</div>
<div class="t" style="left:387.90px;top:279.00px;font-size:5.6px;color:#263030;transform:scaleX(0.9000);transform-origin:0 0;-webkit-text-stroke:.1px currentColor;">77807303</div>
<div class="t" style="left:450.50px;top:279.00px;font-size:5.6px;color:#263030;transform:scaleX(0.9000);transform-origin:0 0;-webkit-text-stroke:.1px currentColor;">07/23/2009</div>
<div class="t" style="left:497.20px;top:279.00px;font-size:5.6px;color:#263030;transform:scaleX(0.9000);transform-origin:0 0;-webkit-text-stroke:.1px currentColor;">20,800.00</div>
<div class="t" style="left:530.36px;top:279.00px;font-size:5.6px;color:#263030;transform:scaleX(0.9000);transform-origin:0 0;-webkit-text-stroke:.1px currentColor;">10%</div>
<div class="t" style="left:553.60px;top:279.00px;font-size:5.6px;color:#263030;transform:scaleX(0.9000);transform-origin:0 0;-webkit-text-stroke:.1px currentColor;">18,720.00</div>
</div>
<div class="a" style="left:186.6px;top:71.5px;width:21.4px;height:128px;background:#fff;box-shadow:0 0 3px rgba(0,0,0,.18)"></div>
<svg class="a" style="left:193.9px;top:75.6px" width="8" height="6" viewBox="0 0 8 6"><path d="M.9 3 H7.1" fill="none" stroke="#34435f" stroke-width=".8"/><path d="M1.9 2 L.9 3 L1.9 4 M6.1 2 L7.1 3 L6.1 4" fill="none" stroke="#34435f" stroke-width=".6"/></svg>
<div class="t" style="left:191.40px;top:83.00px;font-size:5.8px;color:#757575;transform:scaleX(0.8767);transform-origin:0 0;">Width</div>
<svg class="a" style="left:193.9px;top:96.2px" width="8" height="8" viewBox="0 0 8 8"><path d="M4 1 V7 M1 4 H7" fill="none" stroke="#34435f" stroke-width=".8"/><path d="M3.2 1.7 L4 .8 L4.8 1.7 M3.2 6.3 L4 7.2 L4.8 6.3 M1.7 3.2 L.8 4 L1.7 4.8 M6.3 3.2 L7.2 4 L6.3 4.8" fill="none" stroke="#34435f" stroke-width=".6"/></svg>
<div class="t" style="left:192.40px;top:104.00px;font-size:5.8px;color:#757575;transform:scaleX(0.8120);transform-origin:0 0;">Page</div>
<svg class="a" style="left:193.9px;top:117.8px" width="8" height="8" viewBox="0 0 8 8"><circle cx="3.4" cy="3.3" r="1.9" fill="none" stroke="#34435f" stroke-width=".9"/><path d="M4.8 4.8 L6.8 6.9" stroke="#34435f" stroke-width="1.1"/><path d="M2.5 3.3 H4.3 M3.4 2.4 V4.2" stroke="#34435f" stroke-width=".5"/></svg>
<div class="t" style="left:191.60px;top:126.00px;font-size:5.8px;color:#757575;transform:scaleX(0.8497);transform-origin:0 0;">Zoom</div>
<svg class="a" style="left:193.9px;top:139.2px" width="8" height="8" viewBox="0 0 8 8"><rect x="1.2" y="1" width="2.8" height="6" fill="#34435f"/><rect x="4.6" y="1" width="2.2" height="6" fill="#6f7f9c"/></svg>
<div class="t" style="left:189.80px;top:149.00px;font-size:5.8px;color:#757575;transform:scaleX(0.8618);transform-origin:0 0;">Layout</div>
<svg class="a" style="left:193.9px;top:161.2px" width="8" height="8" viewBox="0 0 8 8"><path d="M1.2 3 V7 H6.6 V5.4" fill="none" stroke="#34435f" stroke-width=".9"/><path d="M2.8 5 C3 3.4 4 2.8 5.2 2.8 V1.4 L7.4 3.3 L5.2 5.1 V3.9 C4.2 3.9 3.4 4.2 2.8 5 Z" fill="#34435f"/></svg>
<div class="t" style="left:187.80px;top:170.00px;font-size:5.8px;color:#757575;transform:scaleX(0.8475);transform-origin:0 0;">Navigate</div>
<svg class="a" style="left:193.8px;top:182.5px" width="9" height="7" viewBox="0 0 9 7"><rect x=".8" y=".8" width="6.4" height="4.6" fill="#34435f"/><path d="M2 2.4 H6 M2 3.8 H4.6" stroke="#fff" stroke-width=".7"/><path d="M8 2.5 V6.4 H3" fill="none" stroke="#34435f" stroke-width=".8"/></svg>
<div class="t" style="left:190.40px;top:192.00px;font-size:5.8px;color:#757575;transform:scaleX(0.7518);transform-origin:0 0;">Suggest</div>
<div class="a" style="left:601px;top:75px;width:148px;height:199px;background:#fff;box-shadow:0 1px 3px rgba(0,0,0,.18)"></div>
<div class="a" style="left:601px;top:101.3px;width:148px;height:1px;background:#eaf0ee;"></div>
<div class="a" style="left:601px;top:247px;width:148px;height:1px;background:#eef3f1;"></div>
<div class="a" style="left:669px;top:77.2px;width:10px;height:10px;background:#4d7a6c;border-radius:50%"></div>
<svg class="a" style="left:669px;top:77.2px" width="10" height="10" viewBox="0 0 10 10"><path d="M2.9 5.1 L4.4 6.5 L7.2 3.5" fill="none" stroke="#fff" stroke-width="1.1"/></svg>
<div class="t" style="left:630.00px;top:90.00px;font-size:8.2px;color:#555;transform:scaleX(0.8503);transform-origin:0 0;">TestQABrokerStatementNew</div>
<svg class="a" style="left:609.8px;top:84.4px" width="4" height="6" viewBox="0 0 4 6"><path d="M2.8 .8 L1.2 3 L2.8 5.2" fill="none" stroke="#444" stroke-width="1.1"/></svg>
<svg class="a" style="left:735.2px;top:84.4px" width="4" height="6" viewBox="0 0 4 6"><path d="M1.2 .8 L2.8 3 L1.2 5.2" fill="none" stroke="#444" stroke-width="1.1"/></svg>
<div class="t" style="left:609.00px;top:112.00px;font-size:7.6px;color:#999f9e;transform:scaleX(0.8812);transform-origin:0 0;">Table</div>
<div class="a" style="left:609px;top:121px;width:123px;height:57.5px;background:#fff;border:1px solid #6fb09c"></div>
<div class="a" style="left:610px;top:122px;width:121px;height:10.5px;background:#edf1f0;"></div>
<div class="a" style="left:610px;top:132.6px;width:121px;height:0.8px;background:#dde7e4;"></div>
<div class="a" style="left:610px;top:143.3px;width:121px;height:0.8px;background:#dde7e4;"></div>
<div class="a" style="left:610px;top:154.2px;width:121px;height:0.8px;background:#dde7e4;"></div>
<div class="a" style="left:610px;top:164.9px;width:121px;height:0.8px;background:#dde7e4;"></div>
<div class="a" style="left:639.4px;top:122px;width:0.8px;height:55.5px;background:#dde7e4;"></div>
<div class="a" style="left:669.9px;top:122px;width:0.8px;height:55.5px;background:#dde7e4;"></div>
<div class="a" style="left:700.4px;top:122px;width:0.8px;height:55.5px;background:#dde7e4;"></div>
<div class="a" style="left:719.1px;top:163.0px;width:9.2px;height:9.2px;background:#4d7a6c;border-radius:50%"></div>
<svg class="a" style="left:719.1px;top:163.0px" width="9.2" height="9.2" viewBox="0 0 9.2 9.2"><path d="M2.6 6.6 L5 4.2" stroke="#fff" stroke-width="1.3" stroke-linecap="round"/><circle cx="5.6" cy="3.6" r="1.5" fill="#fff"/><rect x="5.6" y="1.6" width="1.2" height="1.6" fill="#4d7a6c" transform="rotate(45 5.9 2.9)"/></svg>
<div class="t" style="left:609.00px;top:189.00px;font-size:7.6px;color:#999f9e;transform:scaleX(0.8859);transform-origin:0 0;">Total Gross Premium</div>
<div class="a" style="left:609px;top:198.6px;width:123px;height:9.8px;background:#fff;border:1px solid #ebf0ee"></div>
<div class="t" style="left:610.20px;top:201.00px;font-size:6.6px;color:#444;transform:scaleX(0.8821);transform-origin:0 0;">$1,444,600.00</div>
<div class="t" style="left:609.00px;top:219.00px;font-size:7.6px;color:#999f9e;transform:scaleX(0.9045);transform-origin:0 0;">Total Net Premium</div>
<div class="a" style="left:609px;top:228.3px;width:123px;height:9.8px;background:#fff;border:1px solid #ebf0ee"></div>
<div class="t" style="left:610.20px;top:231.00px;font-size:6.6px;color:#444;transform:scaleX(0.8834);transform-origin:0 0;">$1,244,595.000</div>
<div class="a" style="left:658.3px;top:226.5px;width:0.9px;height:7.5px;background:#555;"></div>
<div class="a" style="left:657px;top:226.3px;width:3.5px;height:0.8px;background:#666;"></div>
<div class="a" style="left:657px;top:233.5px;width:3.5px;height:0.8px;background:#666;"></div>
<div class="a" style="left:740.8px;top:102.3px;width:7px;height:144.7px;background:#eff3f2;"></div>
<div class="a" style="left:741.4px;top:193px;width:5.4px;height:45.4px;background:#adaeae;"></div>
<svg class="a" style="left:741.8px;top:104px" width="5" height="4" viewBox="0 0 5 4"><path d="M.4 3.4 L2.5 .6 L4.6 3.4 Z" fill="#555"/></svg>
<svg class="a" style="left:741.8px;top:241px" width="5" height="4" viewBox="0 0 5 4"><path d="M.8 .9 L2.5 3.2 L4.2 .9 Z" fill="#8a8a8a"/></svg>
<div class="a" style="left:660.7px;top:255.3px;width:27.8px;height:11.6px;background:#fff;border-radius:6px;border:1px solid #e6ecea"></div>
<div class="t" style="left:665.10px;top:259.00px;font-size:5.6px;color:#555;transform:scaleX(0.9254);transform-origin:0 0;">0 issues</div>
<div class="a" style="left:185px;top:276px;width:566px;height:6.8px;background:linear-gradient(to bottom,rgba(0,0,0,0),rgba(0,0,0,.07) 45%,rgba(0,0,0,.22))"></div>
<div class="a" style="left:185px;top:282.8px;width:566px;height:126.7px;background:#fff;"></div>
<div class="t" style="left:213.00px;top:290.00px;font-size:7.6px;color:#666;transform:scaleX(0.9198);transform-origin:0 0;">Table</div>
<div class="t" style="left:411.90px;top:294.00px;font-size:7px;color:#9aa5a5;transform:scaleX(0.8069);transform-origin:0 0;">PREVIOUS</div>
<div class="a" style="left:455px;top:290.5px;width:40px;height:12.5px;background:#fff;border-radius:6.5px;border:1px solid #e9efed"></div>
<div class="t" style="left:458.30px;top:295.00px;font-size:5.8px;color:#555;transform:scaleX(0.8891);transform-origin:0 0;">0 Issues</div>
<div class="t" style="left:497.00px;top:294.00px;font-size:7px;color:#80b8a8;transform:scaleX(0.7566);transform-origin:0 0;">NEXT ISSUE</div>
<div class="a" style="left:472px;top:284px;width:36px;height:10.2px;background:#2c3b5a;"></div>
<div class="t" style="left:474.50px;top:286.00px;font-size:7px;color:#fff;transform:scaleX(0.8833);transform-origin:0 0;">Number</div>
<div class="a" style="left:472px;top:294.2px;width:34.5px;height:9.3px;background:#e9eded;"></div>
<div class="t" style="left:474.30px;top:297.00px;font-size:6.4px;color:#555;transform:scaleX(0.9375);transform-origin:0 0;">07/23/2009</div>
<div class="a" style="left:704px;top:291px;width:36px;height:13.3px;background:#4a7466;border-radius:6.7px"></div>
<div class="t" style="left:712.25px;top:295.00px;font-size:6.6px;color:#fff;font-weight:bold;transform:scaleX(0.8583);transform-origin:0 0;">CLOSE</div>
<svg class="a" style="left:746px;top:289.5px" width="6" height="6" viewBox="0 0 6 6"><path d="M2.4 1 H.8 V5.2 H5 V3.6" fill="none" stroke="#8a8f90" stroke-width=".7"/><path d="M3.4 .7 H5.3 V2.6 M5.3 .7 L2.8 3.2" fill="none" stroke="#8a8f90" stroke-width=".7"/></svg>
<div class="a" style="left:185px;top:311px;width:566px;height:12.4px;background:#34435f;"></div>
<div class="a" style="left:222.29999999999998px;top:311px;width:0.8px;height:12.4px;background:#7c89a1;"></div>
<div class="a" style="left:395.3px;top:311px;width:0.8px;height:12.4px;background:#7c89a1;"></div>
<div class="a" style="left:466.1px;top:311px;width:0.8px;height:12.4px;background:#7c89a1;"></div>
<div class="a" style="left:511.9px;top:311px;width:0.8px;height:12.4px;background:#7c89a1;"></div>
<div class="a" style="left:593.0px;top:311px;width:0.8px;height:12.4px;background:#7c89a1;"></div>
<div class="a" style="left:654.0px;top:311px;width:0.8px;height:12.4px;background:#7c89a1;"></div>
<div class="a" style="left:705.0px;top:311px;width:0.8px;height:12.4px;background:#7c89a1;"></div>
<div class="t" style="left:185.60px;top:314.00px;font-size:7.6px;color:#fff;font-weight:bold;transform:scaleX(0.8431);transform-origin:0 0;">Number</div>
<div class="t" style="left:225.50px;top:314.00px;font-size:7.6px;color:#fff;font-weight:bold;transform:scaleX(0.8506);transform-origin:0 0;">Insured name</div>
<div class="t" style="left:398.70px;top:314.00px;font-size:7.6px;color:#fff;font-weight:bold;transform:scaleX(0.8181);transform-origin:0 0;">Policy Number</div>
<div class="t" style="left:469.50px;top:314.00px;font-size:7.6px;color:#fff;font-weight:bold;transform:scaleX(0.8056);transform-origin:0 0;">Client Code</div>
<div class="t" style="left:515.00px;top:314.00px;font-size:7.6px;color:#fff;font-weight:bold;transform:scaleX(0.8261);transform-origin:0 0;">Effective Date</div>
<div class="t" style="left:596.50px;top:314.00px;font-size:7.6px;color:#fff;font-weight:bold;transform:scaleX(0.8133);transform-origin:0 0;">Gross Premium</div>
<div class="t" style="left:657.00px;top:314.00px;font-size:7.6px;color:#fff;font-weight:bold;transform:scaleX(0.8140);transform-origin:0 0;">Commision R...</div>
<div class="t" style="left:707.90px;top:314.00px;font-size:7.6px;color:#fff;font-weight:bold;transform:scaleX(0.8497);transform-origin:0 0;">Net Premi...</div>
<div class="a" style="left:185px;top:323.4px;width:566px;height:13.200000000000045px;background:#eef1f1;"></div>
<div class="a" style="left:185px;top:323.4px;width:210.5px;height:13.200000000000045px;background:#fff;"></div>
<div class="a" style="left:222.29999999999998px;top:323.4px;width:0.8px;height:13.200000000000045px;background:#dfe8e6;"></div>
<div class="a" style="left:395.3px;top:323.4px;width:0.8px;height:13.200000000000045px;background:#dfe8e6;"></div>
<div class="a" style="left:466.1px;top:323.4px;width:0.8px;height:13.200000000000045px;background:#dfe8e6;"></div>
<div class="a" style="left:511.9px;top:323.4px;width:0.8px;height:13.200000000000045px;background:#dfe8e6;"></div>
<div class="a" style="left:593.0px;top:323.4px;width:0.8px;height:13.200000000000045px;background:#dfe8e6;"></div>
<div class="a" style="left:654.0px;top:323.4px;width:0.8px;height:13.200000000000045px;background:#dfe8e6;"></div>
<div class="a" style="left:705.0px;top:323.4px;width:0.8px;height:13.200000000000045px;background:#dfe8e6;"></div>
<div class="t" style="left:186.20px;top:327.00px;font-size:7.2px;color:#5a5a5a;">1</div>
<div class="t" style="left:225.50px;top:327.00px;font-size:7.2px;color:#5a5a5a;transform:scaleX(0.8600);transform-origin:0 0;">Rowe Sellers Services Co.</div>
<div class="t" style="left:400.40px;top:327.00px;font-size:7.2px;color:#5a5a5a;transform:scaleX(0.8850);transform-origin:0 0;">5274230364</div>
<div class="t" style="left:471.50px;top:327.00px;font-size:7.2px;color:#5a5a5a;transform:scaleX(0.8850);transform-origin:0 0;">11247131</div>
<div class="t" style="left:516.80px;top:327.00px;font-size:7.2px;color:#5a5a5a;transform:scaleX(0.8850);transform-origin:0 0;">07 22, 2009 0:00:00</div>
<div class="t" style="left:598.20px;top:327.00px;font-size:7.2px;color:#5a5a5a;transform:scaleX(0.8850);transform-origin:0 0;">$12,400.000</div>
<div class="t" style="left:659.00px;top:327.00px;font-size:7.2px;color:#5a5a5a;transform:scaleX(0.8850);transform-origin:0 0;">5.00 %</div>
<div class="t" style="left:710.10px;top:327.00px;font-size:7.2px;color:#5a5a5a;transform:scaleX(0.8850);transform-origin:0 0;">$11,780.00</div>
<div class="a" style="left:185px;top:336.6px;width:566px;height:12.899999999999977px;background:#fff;"></div>
<div class="a" style="left:222.29999999999998px;top:336.6px;width:0.8px;height:12.899999999999977px;background:#dfe8e6;"></div>
<div class="a" style="left:395.3px;top:336.6px;width:0.8px;height:12.899999999999977px;background:#dfe8e6;"></div>
<div class="a" style="left:466.1px;top:336.6px;width:0.8px;height:12.899999999999977px;background:#dfe8e6;"></div>
<div class="a" style="left:511.9px;top:336.6px;width:0.8px;height:12.899999999999977px;background:#dfe8e6;"></div>
<div class="a" style="left:593.0px;top:336.6px;width:0.8px;height:12.899999999999977px;background:#dfe8e6;"></div>
<div class="a" style="left:654.0px;top:336.6px;width:0.8px;height:12.899999999999977px;background:#dfe8e6;"></div>
<div class="a" style="left:705.0px;top:336.6px;width:0.8px;height:12.899999999999977px;background:#dfe8e6;"></div>
<div class="t" style="left:187.00px;top:340.00px;font-size:7.2px;color:#5a5a5a;">2</div>
<div class="t" style="left:228.00px;top:340.00px;font-size:7.2px;color:#5a5a5a;transform:scaleX(0.8850);transform-origin:0 0;">ME LLC.</div>
<div class="t" style="left:400.40px;top:340.00px;font-size:7.2px;color:#5a5a5a;transform:scaleX(0.8850);transform-origin:0 0;">604072410</div>
<div class="t" style="left:471.50px;top:340.00px;font-size:7.2px;color:#5a5a5a;transform:scaleX(0.8850);transform-origin:0 0;">33383206</div>
<div class="t" style="left:516.80px;top:340.00px;font-size:7.2px;color:#5a5a5a;transform:scaleX(0.8850);transform-origin:0 0;">07 29, 2009 0:00:00</div>
<div class="t" style="left:598.20px;top:340.00px;font-size:7.2px;color:#5a5a5a;transform:scaleX(0.8850);transform-origin:0 0;">$185,800.000</div>
<div class="t" style="left:659.00px;top:340.00px;font-size:7.2px;color:#5a5a5a;transform:scaleX(0.8850);transform-origin:0 0;">10.00 %</div>
<div class="t" style="left:710.10px;top:340.00px;font-size:7.2px;color:#5a5a5a;transform:scaleX(0.8850);transform-origin:0 0;">$167,220...</div>
<div class="a" style="left:185px;top:349.5px;width:566px;height:13.0px;background:#eef1f1;"></div>
<div class="a" style="left:222.29999999999998px;top:349.5px;width:0.8px;height:13.0px;background:#dfe8e6;"></div>
<div class="a" style="left:395.3px;top:349.5px;width:0.8px;height:13.0px;background:#dfe8e6;"></div>
<div class="a" style="left:466.1px;top:349.5px;width:0.8px;height:13.0px;background:#dfe8e6;"></div>
<div class="a" style="left:511.9px;top:349.5px;width:0.8px;height:13.0px;background:#dfe8e6;"></div>
<div class="a" style="left:593.0px;top:349.5px;width:0.8px;height:13.0px;background:#dfe8e6;"></div>
<div class="a" style="left:654.0px;top:349.5px;width:0.8px;height:13.0px;background:#dfe8e6;"></div>
<div class="a" style="left:705.0px;top:349.5px;width:0.8px;height:13.0px;background:#dfe8e6;"></div>
<div class="t" style="left:187.00px;top:353.00px;font-size:7.2px;color:#5a5a5a;">3</div>
<div class="t" style="left:228.00px;top:353.00px;font-size:7.2px;color:#5a5a5a;transform:scaleX(0.8850);transform-origin:0 0;">Sofia Meehan of East</div>
<div class="t" style="left:400.40px;top:353.00px;font-size:7.2px;color:#5a5a5a;transform:scaleX(0.8850);transform-origin:0 0;">4723248001</div>
<div class="t" style="left:471.50px;top:353.00px;font-size:7.2px;color:#5a5a5a;transform:scaleX(0.8850);transform-origin:0 0;">45384253</div>
<div class="t" style="left:516.80px;top:353.00px;font-size:7.2px;color:#5a5a5a;transform:scaleX(0.8850);transform-origin:0 0;">07 2, 2009 0:00:00</div>
<div class="t" style="left:598.20px;top:353.00px;font-size:7.2px;color:#5a5a5a;transform:scaleX(0.8850);transform-origin:0 0;">$107,900.000</div>
<div class="t" style="left:659.00px;top:353.00px;font-size:7.2px;color:#5a5a5a;transform:scaleX(0.8850);transform-origin:0 0;">15.00 %</div>
<div class="t" style="left:710.10px;top:353.00px;font-size:7.2px;color:#5a5a5a;transform:scaleX(0.8850);transform-origin:0 0;">$91,715.00</div>
<div class="a" style="left:185px;top:362.5px;width:566px;height:13.0px;background:#fff;"></div>
<div class="a" style="left:222.29999999999998px;top:362.5px;width:0.8px;height:13.0px;background:#dfe8e6;"></div>
<div class="a" style="left:395.3px;top:362.5px;width:0.8px;height:13.0px;background:#dfe8e6;"></div>
<div class="a" style="left:466.1px;top:362.5px;width:0.8px;height:13.0px;background:#dfe8e6;"></div>
<div class="a" style="left:511.9px;top:362.5px;width:0.8px;height:13.0px;background:#dfe8e6;"></div>
<div class="a" style="left:593.0px;top:362.5px;width:0.8px;height:13.0px;background:#dfe8e6;"></div>
<div class="a" style="left:654.0px;top:362.5px;width:0.8px;height:13.0px;background:#dfe8e6;"></div>
<div class="a" style="left:705.0px;top:362.5px;width:0.8px;height:13.0px;background:#dfe8e6;"></div>
<div class="t" style="left:187.00px;top:366.00px;font-size:7.2px;color:#5a5a5a;">4</div>
<div class="t" style="left:228.00px;top:366.00px;font-size:7.2px;color:#5a5a5a;transform:scaleX(0.8850);transform-origin:0 0;">Rosemary Systems Ltd</div>
<div class="t" style="left:400.40px;top:366.00px;font-size:7.2px;color:#5a5a5a;transform:scaleX(0.8850);transform-origin:0 0;">3435122665</div>
<div class="t" style="left:471.50px;top:366.00px;font-size:7.2px;color:#5a5a5a;transform:scaleX(0.8850);transform-origin:0 0;">62257354</div>
<div class="t" style="left:516.80px;top:366.00px;font-size:7.2px;color:#5a5a5a;transform:scaleX(0.8850);transform-origin:0 0;">07 3, 2009 0:00:00</div>
<div class="t" style="left:598.20px;top:366.00px;font-size:7.2px;color:#5a5a5a;transform:scaleX(0.8850);transform-origin:0 0;">$151,700.000</div>
<div class="t" style="left:659.00px;top:366.00px;font-size:7.2px;color:#5a5a5a;transform:scaleX(0.8850);transform-origin:0 0;">20.00 %</div>
<div class="t" style="left:710.10px;top:366.00px;font-size:7.2px;color:#5a5a5a;transform:scaleX(0.8850);transform-origin:0 0;">$121,360...</div>
<div class="a" style="left:185px;top:375.5px;width:566px;height:13.5px;background:#eef1f1;"></div>
<div class="a" style="left:222.29999999999998px;top:375.5px;width:0.8px;height:13.5px;background:#dfe8e6;"></div>
<div class="a" style="left:395.3px;top:375.5px;width:0.8px;height:13.5px;background:#dfe8e6;"></div>
<div class="a" style="left:466.1px;top:375.5px;width:0.8px;height:13.5px;background:#dfe8e6;"></div>
<div class="a" style="left:511.9px;top:375.5px;width:0.8px;height:13.5px;background:#dfe8e6;"></div>
<div class="a" style="left:593.0px;top:375.5px;width:0.8px;height:13.5px;background:#dfe8e6;"></div>
<div class="a" style="left:654.0px;top:375.5px;width:0.8px;height:13.5px;background:#dfe8e6;"></div>
<div class="a" style="left:705.0px;top:375.5px;width:0.8px;height:13.5px;background:#dfe8e6;"></div>
<div class="t" style="left:187.00px;top:379.00px;font-size:7.2px;color:#5a5a5a;">5</div>
<div class="t" style="left:228.00px;top:379.00px;font-size:7.2px;color:#5a5a5a;transform:scaleX(0.8850);transform-origin:0 0;">Pharmaceuticals Systems LLC.</div>
<div class="t" style="left:400.40px;top:379.00px;font-size:7.2px;color:#5a5a5a;transform:scaleX(0.8850);transform-origin:0 0;">465738167</div>
<div class="t" style="left:471.50px;top:379.00px;font-size:7.2px;color:#5a5a5a;transform:scaleX(0.8850);transform-origin:0 0;">80551010</div>
<div class="t" style="left:516.80px;top:379.00px;font-size:7.2px;color:#5a5a5a;transform:scaleX(0.8850);transform-origin:0 0;">07 7, 2009 0:00:00</div>
<div class="t" style="left:598.20px;top:379.00px;font-size:7.2px;color:#5a5a5a;transform:scaleX(0.8850);transform-origin:0 0;">$151,200.000</div>
<div class="t" style="left:659.00px;top:379.00px;font-size:7.2px;color:#5a5a5a;transform:scaleX(0.8850);transform-origin:0 0;">10.00 %</div>
<div class="t" style="left:710.10px;top:379.00px;font-size:7.2px;color:#5a5a5a;transform:scaleX(0.8850);transform-origin:0 0;">$136,080...</div>
<div class="a" style="left:185px;top:323.4px;width:37.5px;height:13.2px;border:1px solid #4d7a6c;border-left:none"></div>
<div class="a" style="left:185px;top:389px;width:566px;height:20.5px;background:#f2f4f4;"></div>
<div class="a" style="left:187.5px;top:393.4px;width:21.8px;height:12.4px;border-radius:6.2px;border:1px solid #d5dbda"></div>
<div class="a" style="left:233.4px;top:393.4px;width:21.8px;height:12.4px;border-radius:6.2px;border:1px solid #d5dbda"></div>
<svg class="a" style="left:196.3px;top:396.6px" width="4" height="6" viewBox="0 0 4 6"><path d="M3 .6 L1 3 L3 5.4" fill="none" stroke="#666" stroke-width=".9"/></svg>
<svg class="a" style="left:242.8px;top:396.6px" width="4" height="6" viewBox="0 0 4 6"><path d="M1 .6 L3 3 L1 5.4" fill="none" stroke="#666" stroke-width=".9"/></svg>
<div class="t" style="left:214.80px;top:397.00px;font-size:6.4px;color:#555;transform:scaleX(0.8703);transform-origin:0 0;">Page</div>
<div class="t" style="left:538.80px;top:398.00px;font-size:6.8px;color:#3b4a5a;transform:scaleX(0.8832);transform-origin:0 0;">AUTOCOMPLETE</div>
<div class="t" style="left:616.30px;top:398.00px;font-size:6.8px;color:#3b4a5a;transform:scaleX(0.8683);transform-origin:0 0;">INSERT ROW</div>
<div class="t" style="left:690.70px;top:398.00px;font-size:6.8px;color:#3b4a5a;transform:scaleX(0.8587);transform-origin:0 0;">DELETE ROW</div>
<svg class="a" style="left:658px;top:398px" width="6" height="5" viewBox="0 0 6 5"><path d="M1.2 1.3 L3 3.2 L4.8 1.3" fill="none" stroke="#3b4a5a" stroke-width=".9"/></svg>
<svg class="a" style="left:734px;top:398px" width="6" height="5" viewBox="0 0 6 5"><path d="M1.2 1.3 L3 3.2 L4.8 1.3" fill="none" stroke="#3b4a5a" stroke-width=".9"/></svg>
<div class="a" style="left:185px;top:343px;width:566px;height:66.5px;background:linear-gradient(to bottom,rgba(0,0,0,0) 0%,rgba(0,0,0,.05) 19.5%,rgba(0,0,0,.11) 39%,rgba(0,0,0,.175) 58.6%,rgba(0,0,0,.215) 73.7%,rgba(0,0,0,.325) 100%)"></div>
<svg class="a" style="left:0;top:0" width="1006" height="433" viewBox="0 0 1006 433"><path d="M13 121 H173.4 V169 L204.5 214 L173.4 259 V307.6 H13 Z" fill="#121a58"/><path d="M774 263.5 H967 V409.7 H774 V372.5 L736 336.6 L774 300.7 Z" fill="#121a58"/><path d="M773.3 301.2 V317.6 M773.3 355.6 V372" stroke="#fff" stroke-width="1.4"/></svg>
<div class="t" style="left:18.68px;top:159.00px;font-size:19.6px;color:#fff;">Table names and</div>
<div class="t" style="left:41.01px;top:182.00px;font-size:19.6px;color:#fff;">values have</div>
<div class="t" style="left:46.45px;top:206.00px;font-size:19.6px;color:#fff;">been auto-</div>
<div class="t" style="left:32.85px;top:229.00px;font-size:19.6px;color:#fff;">extracted with</div>
<div class="t" style="left:21.94px;top:253.00px;font-size:19.6px;color:#fff;">high confidence.</div>
<div class="t" style="left:786.63px;top:292.00px;font-size:19.6px;color:#fff;">The extracted table</div>
<div class="t" style="left:788.26px;top:316.00px;font-size:19.6px;color:#fff;">can now be sent to</div>
<div class="t" style="left:787.19px;top:340.00px;font-size:19.6px;color:#fff;">any system without</div>
<div class="t" style="left:788.81px;top:364.00px;font-size:19.6px;color:#fff;">further intervention</div>
</div></body></html>
